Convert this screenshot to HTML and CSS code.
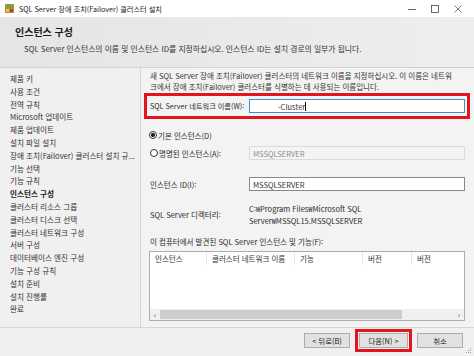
FILE: index.html
```html
<!doctype html>
<html lang="ko">
<head>
  <meta charset="UTF-8" />
  <title>SQL Server 장애 조치(Failover) 클러스터 설치</title>
  <link rel="stylesheet" href="styles.css">
</head>
<body>
  <div class="window">
    <!-- Title bar -->
    <div class="titlebar">
      <svg class="app-icon" width="9" height="9" viewBox="0 0 9 9">
        <rect x="0" y="0" width="9" height="9" fill="#b8913c"/>
        <rect x="1" y="1" width="7" height="3" fill="#6fa83a"/>
        <rect x="1" y="5" width="3" height="3" fill="#e8c050"/>
        <rect x="5" y="5" width="3" height="3" fill="#c0392b"/>
      </svg>
      <span class="title">SQL Server 장애 조치(Failover) 클러스터 설치</span>
      <div class="controls">
        <span class="ctrl">
          <svg width="8" height="8" viewBox="0 0 8 8"><path d="M0 4.5h8" stroke="#444" stroke-width="0.8"/></svg>
        </span>
        <span class="ctrl">
          <svg width="8" height="8" viewBox="0 0 8 8"><rect x="0.5" y="0.5" width="7" height="7" fill="none" stroke="#444" stroke-width="0.8"/></svg>
        </span>
        <span class="ctrl">
          <svg width="8" height="8" viewBox="0 0 8 8"><path d="M0.5 0.5l7 7M7.5 0.5l-7 7" stroke="#444" stroke-width="0.7"/></svg>
        </span>
      </div>
    </div>

    <!-- Page header -->
    <header class="page-header">
      <h1>인스턴스 구성</h1>
      <p>SQL Server 인스턴스의 이름 및 인스턴스 ID를 지정하십시오. 인스턴스 ID는 설치 경로의 일부가 됩니다.</p>
    </header>

    <div class="main">
      <!-- Step list -->
      <ul class="steps">
        <li>제품 키</li>
        <li>사용 조건</li>
        <li>전역 규칙</li>
        <li>Microsoft 업데이트</li>
        <li>제품 업데이트</li>
        <li>설치 파일 설치</li>
        <li>장애 조치(Failover) 클러스터 설치 규...</li>
        <li>기능 선택</li>
        <li>기능 규칙</li>
        <li class="current">인스턴스 구성</li>
        <li>클러스터 리소스 그룹</li>
        <li>클러스터 디스크 선택</li>
        <li>클러스터 네트워크 구성</li>
        <li>서버 구성</li>
        <li>데이터베이스 엔진 구성</li>
        <li>기능 구성 규칙</li>
        <li>설치 준비</li>
        <li>설치 진행률</li>
        <li>완료</li>
      </ul>

      <!-- Form -->
      <section class="content">
        <p class="desc">새 SQL Server 장애 조치(Failover) 클러스터의 네트워크 이름을 지정하십시오. 이 이름은 네트워크에서 장애 조치(Failover) 클러스터를 식별하는 데 사용되는 이름입니다.</p>

        <div class="row net-row highlight">
          <span class="label">SQL Server 네트워크 이름(W):</span>
          <div class="field focused"><span class="net-name">-Cluster</span><span class="caret"></span></div>
        </div>

        <div class="row radio-row first">
          <span class="radio checked"></span>
          <span>기본 인스턴스(D)</span>
        </div>

        <div class="row radio-row">
          <span class="label"><span class="radio"></span>명명된 인스턴스(A):</span>
          <div class="field disabled">MSSQLSERVER</div>
        </div>

        <div class="row id-row">
          <span class="label">인스턴스 ID(I):</span>
          <div class="field">MSSQLSERVER</div>
        </div>

        <div class="dir-row">
          <span class="label">SQL Server 디렉터리:</span>
          <span class="dir-value">C:₩Program Files₩Microsoft SQL<br>Server₩MSSQL15.MSSQLSERVER</span>
        </div>

        <p class="caption">이 컴퓨터에서 발견된 SQL Server 인스턴스 및 기능(F):</p>

        <div class="list">
          <div class="list-head">
            <span>인스턴스</span>
            <span>클러스터 네트워크 이름</span>
            <span>기능</span>
            <span>버전</span>
            <span>버전</span>
          </div>
          <div class="list-body"></div>
          <div class="hscroll">
            <span class="arrow">‹</span>
            <span class="thumb"></span>
            <span class="arrow right">›</span>
          </div>
        </div>
      </section>
    </div>

    <!-- Buttons -->
    <footer class="buttons">
      <button class="btn back">&lt; 뒤로(B)</button>
      <button class="btn next highlight">다음(N) &gt;</button>
      <button class="btn cancel">취소</button>
      <svg class="grip" width="7" height="7" viewBox="0 0 7 7">
        <rect x="5" y="1" width="1" height="1" fill="#a0a0a0"/>
        <rect x="3" y="3" width="1" height="1" fill="#a0a0a0"/>
        <rect x="5" y="3" width="1" height="1" fill="#a0a0a0"/>
        <rect x="1" y="5" width="1" height="1" fill="#a0a0a0"/>
        <rect x="3" y="5" width="1" height="1" fill="#a0a0a0"/>
        <rect x="5" y="5" width="1" height="1" fill="#a0a0a0"/>
      </svg>
    </footer>
  </div>
</body>
</html>
```

FILE: styles.css
```css
/* ------------------ Reset & Globals ------------------ */
* {
  margin: 0;
  padding: 0;
  box-sizing: border-box;
}
body {
  font-family: "Noto Sans CJK KR", "Noto Sans", sans-serif;
  font-size: 7.5px;
  color: #2a2a2a;
  background: #f0f0f0;
  width: 474px;
  height: 356px;
  overflow: hidden;
}
.window {
  display: flex;
  flex-direction: column;
  height: 356px;
}

/* ------------------ Title bar ------------------ */
.titlebar {
  height: 17px;
  display: flex;
  align-items: center;
  padding-left: 5px;
  background: #fff;
}
.app-icon {
  margin-right: 5px;
}
.title {
  font-size: 7.2px;
  color: #222;
}
.controls {
  margin-left: auto;
  margin-right: 5px;
  display: flex;
}
.ctrl {
  width: 23px;
  height: 17px;
  display: flex;
  align-items: center;
  justify-content: center;
}

/* ------------------ Page header ------------------ */
.page-header {
  height: 51px;
  padding: 8px 0 0 15px;
  background: linear-gradient(to right, #e5e5e5, #eeeeee);
  border-bottom: 1px solid #d2d2d2;
}
.page-header h1 {
  font-size: 10px;
  font-weight: bold;
  line-height: 14px;
  color: #1b1b1b;
}
.page-header p {
  margin: 5px 0 0 9px;
  font-size: 7.8px;
  line-height: 10px;
  color: #333;
}

/* ------------------ Main area ------------------ */
.main {
  display: flex;
  height: 259px;
}
.steps {
  list-style: none;
  width: 141px;
  padding: 5px 4px 0 10px;
  font-size: 7.6px;
  line-height: 12.8px;
  background: #f0f0f0;
  border-right: 1px solid #d6d6d6;
  color: #333;
}
.steps li {
  white-space: nowrap;
  overflow: hidden;
}
.steps li.current {
  font-weight: bold;
  color: #1b1b1b;
}
.content {
  flex: 1;
  padding: 2px 9px 0 8px;
  background: #f3f3f3;
}
.desc {
  width: 306px;
  padding-left: 1px;
  line-height: 11px;
  word-break: break-all;
  color: #333;
}
.row {
  display: flex;
  align-items: center;
}
.label {
  width: 100px;
  flex-shrink: 0;
  padding-left: 1px;
  display: flex;
  align-items: center;
  white-space: nowrap;
}
.net-row .label {
  font-size: 7.2px;
}
.highlight {
  outline: 3px solid #e2151c;
  outline-offset: 2px;
}
.net-row {
  margin-top: 6px;
  height: 16px;
}
.field {
  flex: 1;
  height: 14px;
  display: flex;
  align-items: center;
  padding-left: 3px;
  background: #fff;
  border: 1px solid #8a8a8a;
  color: #333;
}
.field.focused {
  border-color: #3d8fd6;
}
.field.disabled {
  background: #f4f4f4;
  border-color: #dadada;
  color: #8c8c8c;
}
.net-name {
  margin-left: 25px;
}
.caret {
  width: 1px;
  height: 9px;
  background: #111;
}
.radio-row {
  margin-top: 5px;
  height: 14px;
}
.radio-row.first {
  margin-top: 15px;
  height: 12px;
}
.radio {
  width: 8px;
  height: 8px;
  border-radius: 50%;
  border: 1px solid #333;
  background: #fff;
  margin-right: 1px;
}
.radio.checked {
  background: radial-gradient(circle, #222 0 1.8px, #fff 2.3px);
}
.id-row {
  margin-top: 17px;
  height: 14px;
}
.dir-row {
  display: flex;
  margin-top: 12px;
  line-height: 12px;
}
.caption {
  margin-top: 9px;
  line-height: 12px;
  padding-left: 1px;
}

/* ------------------ Instance list ------------------ */
.list {
  margin-top: 3px;
  height: 70px;
  display: flex;
  flex-direction: column;
  background: #fff;
  border: 1px solid #adadad;
}
.list-head {
  display: grid;
  grid-template-columns: 57px 88px 68px 49px 1fr;
  height: 13px;
  align-items: center;
  color: #333;
}
.list-head span {
  padding-left: 5px;
  border-right: 1px solid #e6e6e6;
  line-height: 13px;
}
.list-head span:last-child {
  border-right: none;
}
.list-body {
  flex: 1;
}
.hscroll {
  height: 11px;
  display: flex;
  align-items: center;
  background: #f0f0f0;
}
.arrow {
  width: 10px;
  text-align: center;
  font-size: 8px;
  line-height: 11px;
  color: #555;
}
.arrow.right {
  margin-left: auto;
}
.thumb {
  width: 242px;
  height: 9px;
  background: #cdcdcd;
}

/* ------------------ Buttons ------------------ */
.buttons {
  height: 29px;
  display: flex;
  align-items: flex-start;
  padding: 5px 2px 0 0;
  border-top: 1px solid #d6d6d6;
  background: #f0f0f0;
  justify-content: flex-end;
}
.btn {
  height: 15px;
  font-family: inherit;
  font-size: 7.4px;
  color: #222;
  background: #e1e1e1;
  border: 1px solid #adadad;
}
.btn.back {
  width: 46px;
}
.btn.next {
  width: 49px;
  margin-left: 9px;
  outline-offset: 1px;
}
.btn.cancel {
  width: 46px;
  margin-left: 9px;
}
.grip {
  align-self: flex-end;
  margin: 0 0 2px 2px;
}
```
